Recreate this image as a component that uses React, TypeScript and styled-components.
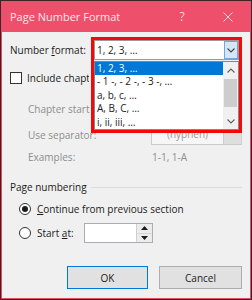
import React from 'react';
import styled, { createGlobalStyle } from 'styled-components';

const GlobalStyle = createGlobalStyle`
  html, body { margin: 0; padding: 0; background: #ffffff; }
  body { font-family: "Open Sans", "Noto Sans", sans-serif; }
`;

const Window = styled.div`
  width: 252px;
  height: 300px;
  box-sizing: border-box;
  border: 1px solid #3d2429;
  box-shadow: inset 0 0 0 1px #e24a63;
  background: #f0f0f0;
  display: flex;
  flex-direction: column;
  overflow: hidden;
  font-family: "Open Sans", "Noto Sans", sans-serif;
  font-size: 10px;
  color: #1b1b1b;
`;

const TitleBar = styled.div`
  flex: none;
  height: 31px;
  background: #ee4f6a;
  display: flex;
  align-items: center;
  padding-left: 9px;
  color: #fde6ea;
  font-size: 11px;
`;

const Title = styled.span`
  flex: 1;
  white-space: nowrap;
`;

const TitleButton = styled.span`
  width: 46px;
  height: 31px;
  display: flex;
  align-items: center;
  justify-content: center;
  font-size: 12px;
  color: #fbd9df;
`;

const Content = styled.div`
  flex: 1;
  display: flex;
  flex-direction: column;
  padding: 8px 9px 0 9px;
`;

const Row = styled.div<{ $top?: number; $height: number; $indent?: number }>`
  display: flex;
  align-items: center;
  flex: none;
  margin-top: ${p => p.$top ?? 0}px;
  height: ${p => p.$height}px;
  padding-left: ${p => p.$indent ?? 0}px;
  white-space: nowrap;
`;

const Label = styled.span<{ $width?: number; $disabled?: boolean }>`
  flex: none;
  width: ${p => (p.$width ? `${p.$width}px` : 'auto')};
  color: ${p => (p.$disabled ? '#8e8e8e' : '#1b1b1b')};
  white-space: nowrap;
  overflow: hidden;
`;

/* a label whose tail is covered by the open drop-down list */
const CoveredLabel = styled.span<{ $visible: number; $width: number; $disabled?: boolean }>`
  flex: none;
  display: flex;
  width: ${p => p.$width}px;
  color: ${p => (p.$disabled ? '#8e8e8e' : '#1b1b1b')};
  white-space: nowrap;
  & > span {
    width: ${p => p.$visible}px;
    overflow: hidden;
  }
`;

const Key = styled.span`
  text-decoration: underline;
`;

const ComboField = styled.div`
  position: relative;
  z-index: 5;
  flex: none;
  width: 145px;
  height: 20px;
  box-sizing: border-box;
  border: 1px solid #9a9a9a;
  background: #ffffff;
  display: flex;
`;

const ComboValue = styled.span`
  flex: 1;
  padding-left: 2px;
  line-height: 18px;
`;

const DropButton = styled.span`
  flex: none;
  width: 14px;
  box-sizing: border-box;
  border: 1px solid #6fa8dc;
  background: #d4e6f8;
  display: flex;
  align-items: center;
  justify-content: center;
`;

const DropList = styled.div`
  position: absolute;
  top: 20px;
  left: -1px;
  width: 145px;
  height: 69px;
  box-sizing: border-box;
  border: 1px solid #828790;
  background: #ffffff;
  display: flex;
  overflow: hidden;
`;

const Items = styled.div`
  flex: 1;
  display: flex;
  flex-direction: column;
`;

const Item = styled.div<{ $selected?: boolean }>`
  flex: none;
  height: 13.4px;
  line-height: 13.4px;
  padding-left: 2px;
  background: ${p => (p.$selected ? '#0078d7' : 'transparent')};
  color: ${p => (p.$selected ? '#ffffff' : '#1b1b1b')};
`;

const ScrollBar = styled.div`
  flex: none;
  width: 15px;
  background: #f0f0f0;
  display: flex;
  flex-direction: column;
`;

const ScrollArrow = styled.div`
  flex: none;
  height: 16px;
  display: flex;
  align-items: center;
  justify-content: center;
`;

const ScrollTrack = styled.div`
  flex: 1;
  display: flex;
  flex-direction: column;
  padding: 1px 1px 0 1px;
`;

const ScrollThumb = styled.div`
  height: 28px;
  background: #cdcdcd;
`;

const Highlight = styled.div`
  position: absolute;
  top: -4px;
  left: -4px;
  width: 151px;
  height: 96px;
  box-sizing: border-box;
  border: 3px solid #f20a0a;
  pointer-events: none;
  z-index: 6;
`;

const CheckBox = styled.span`
  flex: none;
  width: 12px;
  height: 12px;
  box-sizing: border-box;
  border: 1px solid #333333;
  background: #ffffff;
  margin-right: 5px;
`;

const DisabledCombo = styled.div`
  flex: none;
  width: 91px;
  height: 21px;
  box-sizing: border-box;
  border: 1px solid #cccccc;
  background: #f6f6f6;
  display: flex;
  color: #9a9a9a;
`;

const DisabledValue = styled.span`
  flex: 1;
  line-height: 19px;
  text-align: center;
`;

const DisabledButton = styled.span`
  flex: none;
  width: 17px;
  border-left: 1px solid #cccccc;
  background: #dedede;
`;

const Value = styled.span<{ $disabled?: boolean }>`
  padding-left: 1px;
  color: ${p => (p.$disabled ? '#8e8e8e' : '#1b1b1b')};
`;

const GroupLine = styled.span`
  flex: 1;
  height: 1px;
  margin-left: 4px;
  background: #dcdcdc;
`;

const Radio = styled.span<{ $checked?: boolean }>`
  flex: none;
  width: 12px;
  height: 12px;
  box-sizing: border-box;
  border-radius: 50%;
  border: 1px solid #333333;
  background: #ffffff;
  margin-right: 6px;
  display: flex;
  align-items: center;
  justify-content: center;
  &::after {
    content: '';
    display: ${p => (p.$checked ? 'block' : 'none')};
    width: 6px;
    height: 6px;
    border-radius: 50%;
    background: #1b1b1b;
  }
`;

const SpinBox = styled.div`
  flex: none;
  width: 69px;
  height: 20px;
  box-sizing: border-box;
  border: 1px solid #abadb3;
  background: #ffffff;
  display: flex;
  justify-content: flex-end;
`;

const SpinButtons = styled.div`
  flex: none;
  width: 15px;
  display: flex;
  flex-direction: column;
  border-left: 1px solid #d0d0d0;
`;

const SpinButton = styled.span`
  flex: 1;
  display: flex;
  align-items: center;
  justify-content: center;
  background: #ececec;
  border-bottom: 1px solid #d6d6d6;
  &:last-child { border-bottom: none; }
`;

const ButtonRow = styled.div`
  flex: none;
  margin-top: 23px;
  display: flex;
  justify-content: flex-end;
  gap: 11px;
`;

const Button = styled.button<{ $default?: boolean; $width: number }>`
  width: ${p => p.$width}px;
  height: 23px;
  box-sizing: border-box;
  border: 1px solid ${p => (p.$default ? '#0078d7' : '#adadad')};
  background: #e1e1e1;
  font-family: inherit;
  font-size: 10px;
  color: #1b1b1b;
  padding: 0;
`;

const Chevron = ({ up = false, color = '#444444' }: { up?: boolean; color?: string }) => (
  <svg width="8" height="5" viewBox="0 0 8 5">
    <path d={up ? 'M0.5 4.5 L4 1 L7.5 4.5' : 'M0.5 0.5 L4 4 L7.5 0.5'} stroke={color} strokeWidth="1.1" fill="none" />
  </svg>
);

const Triangle = ({ up = false }: { up?: boolean }) => (
  <svg width="7" height="4" viewBox="0 0 7 4">
    <path d={up ? 'M0 4 L3.5 0 L7 4 Z' : 'M0 0 L3.5 4 L7 0 Z'} fill="#1b1b1b" />
  </svg>
);

const CloseIcon = () => (
  <svg width="10" height="10" viewBox="0 0 10 10">
    <path d="M0.5 0.5 L9.5 9.5 M9.5 0.5 L0.5 9.5" stroke="#fbd9df" strokeWidth="1" fill="none" />
  </svg>
);

const formats = ['1, 2, 3, \u2026', '- 1 -, - 2 -, - 3 -, \u2026', 'a, b, c, \u2026', 'A, B, C, \u2026', 'i, ii, iii, \u2026'];

export default function App() {
  return (
    <>
      <GlobalStyle />
      <Window>
        <TitleBar>
          <Title>Page Number Format</Title>
          <TitleButton>?</TitleButton>
          <TitleButton>
            <CloseIcon />
          </TitleButton>
        </TitleBar>
        <Content>
          <Row $height={20}>
            <Label $width={84}>
              Number <Key>f</Key>ormat:
            </Label>
            <ComboField>
              <ComboValue>1, 2, 3, …</ComboValue>
              <DropButton>
                <Chevron />
              </DropButton>
              <DropList>
                <Items>
                  {formats.map((f, i) => (
                    <Item key={f} $selected={i === 0}>
                      {f}
                    </Item>
                  ))}
                </Items>
                <ScrollBar>
                  <ScrollArrow>
                    <Chevron up color="#606060" />
                  </ScrollArrow>
                  <ScrollTrack>
                    <ScrollThumb />
                  </ScrollTrack>
                  <ScrollArrow>
                    <Chevron color="#606060" />
                  </ScrollArrow>
                </ScrollBar>
              </DropList>
              <Highlight />
            </ComboField>
          </Row>
          <Row $top={12} $height={12}>
            <CheckBox />
            <CoveredLabel $width={64} $visible={62}>
              <span>Include chapte</span>
            </CoveredLabel>
          </Row>
          <Row $top={14} $height={21} $indent={18}>
            <CoveredLabel $width={123} $visible={62} $disabled>
              <span>Chapter starts</span>
            </CoveredLabel>
            <DisabledCombo />
          </Row>
          <Row $top={5} $height={21} $indent={18}>
            <Label $width={123} $disabled>
              Use separator:
            </Label>
            <DisabledCombo>
              <DisabledValue>(hyphen)</DisabledValue>
              <DisabledButton />
            </DisabledCombo>
          </Row>
          <Row $top={5} $height={14} $indent={18}>
            <Label $width={123} $disabled>
              Examples:
            </Label>
            <Value $disabled>1-1, 1-A</Value>
          </Row>
          <Row $top={16} $height={14}>
            <Label>Page numbering</Label>
            <GroupLine />
          </Row>
          <Row $top={9} $height={12} $indent={9}>
            <Radio $checked />
            <Label>
              <Key>C</Key>ontinue from previous section
            </Label>
          </Row>
          <Row $top={8} $height={20} $indent={9}>
            <Radio />
            <Label $width={47}>
              Start <Key>a</Key>t:
            </Label>
            <SpinBox>
              <SpinButtons>
                <SpinButton>
                  <Triangle up />
                </SpinButton>
                <SpinButton>
                  <Triangle />
                </SpinButton>
              </SpinButtons>
            </SpinBox>
          </Row>
          <ButtonRow>
            <Button $default $width={81}>
              OK
            </Button>
            <Button $width={83}>Cancel</Button>
          </ButtonRow>
        </Content>
      </Window>
    </>
  );
}
